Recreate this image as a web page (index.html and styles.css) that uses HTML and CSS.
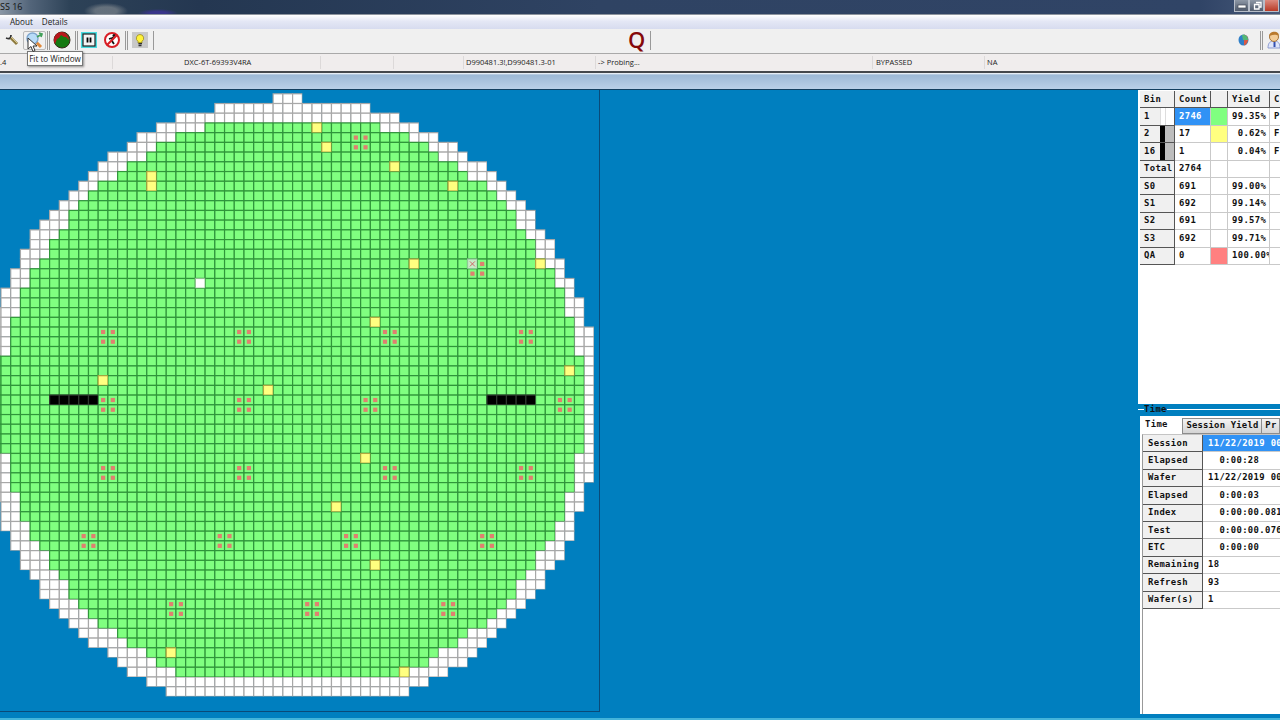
FILE: index.html
```html
<!DOCTYPE html>
<html lang="en">
<head>
    <meta charset="UTF-8">
    <title>SS 16</title>
    <link rel="stylesheet" href="styles.css">
</head>
<body>
    <div class="titlebar">
        <span class="title">SS 16</span>
        <div class="window-buttons">
            <span class="wbtn"><svg width="14" height="14" viewBox="0 0 14 14"><rect x="3" y="5" width="8" height="3" fill="#fff" stroke="#444b58" stroke-width=".7"/></svg></span>
            <span class="wbtn"><svg width="14" height="14" viewBox="0 0 14 14"><path d="M6 2.500h5v4.500h-2M4.500 4.500h4.500v4.500h-4.500z" fill="none" stroke="#fff" stroke-width="1.300"/></svg></span>
            <span class="wbtn close"></span>
        </div>
    </div>

    <div class="menubar">
        <span>About</span>
        <span>Details</span>
    </div>

    <div class="toolbar">
        <div class="tools">
            <svg class="tool wrench" width="16" height="16" viewBox="0 0 16 16">
                <path d="M2 6c3 1 5 1 5-3" fill="none" stroke="#333" stroke-width="1.8"/>
                <path d="M7 6l6 6" stroke="#8d7a3e" stroke-width="3"/>
                <path d="M7 5l6 6" stroke="#d6c68a" stroke-width="1"/>
            </svg>
            <span class="tool fit">
                <svg width="20" height="18" viewBox="0 0 20 18">
                    <path d="M11 10l5 5" stroke="#e08a3c" stroke-width="3"/>
                    <circle cx="7.5" cy="6.5" r="5.5" fill="#b8dcf8" stroke="#7ea6cf" stroke-width="1.4"/>
                    <path d="M12 5l5-3M14 1l3 1-1 3" fill="none" stroke="#43a05a" stroke-width="1.7"/>
                </svg>
            </span>
            <i class="sep"></i>
            <svg class="tool map" width="18" height="18" viewBox="0 0 18 18">
                <circle cx="9" cy="9" r="8" fill="#167a12" stroke="#3a2a1c" stroke-width="1"/>
                <path d="M9 1A8 8 0 0 0 2 13L4 8l2-1 2-3 3 2 2 0 3 3A8 8 0 0 0 9 1z" fill="#b8181c"/>
            </svg>
            <i class="sep"></i>
            <svg class="tool pause" width="16" height="16" viewBox="0 0 16 16">
                <rect x="0" y="0" width="16" height="16" fill="#48dce0"/>
                <rect x="2" y="2" width="12" height="12" fill="#f4f4f4" stroke="#222" stroke-width="1.2"/>
                <path d="M6.500 5.500v5M9.500 5.500v5" stroke="#000" stroke-width="1.800"/>
            </svg>
            <svg class="tool stop" width="18" height="18" viewBox="0 0 18 18">
                <circle cx="9" cy="9" r="7" fill="#fff" stroke="#d81f26" stroke-width="2"/>
                <circle cx="11" cy="4.500" r="1.500" fill="#111"/>
                <path d="M10 6l-1 4 2 3M9 7l-3 1" fill="none" stroke="#111" stroke-width="1.800"/>
                <path d="M14 4L4 14" stroke="#d81f26" stroke-width="2.200"/>
            </svg>
            <i class="sep"></i>
            <span class="tool bulb">
                <svg width="16" height="16" viewBox="0 0 16 16">
                    <path d="M8 2.500a3.700 3.700 0 0 0-2 6.800V11h4V9.300a3.700 3.700 0 0 0-2-6.800z" fill="#fff23a" stroke="#9d8d18" stroke-width=".8"/>
                    <path d="M6.500 11.500h3.500M6.500 13.500h3" stroke="#333" stroke-width="1.300"/>
                </svg>
            </span>
            <i class="sep single"></i>
        </div>
        <span class="q">Q</span>
        <i class="sep single"></i>
        <div class="right-tools">
            <svg class="tool" width="12" height="14" viewBox="0 0 12 14">
                <ellipse cx="6.500" cy="7" rx="5" ry="5.500" fill="#2f7fc8"/>
                <path d="M7 1.500c6 1 5 9 0 11z" fill="#dc5a42"/>
                <path d="M5 2c4-1 6 2 6 5l-5 0z" fill="#52b878"/>
            </svg>
            <i class="sep"></i>
            <svg class="tool user" width="14" height="18" viewBox="0 0 14 18">
                <path d="M1 17c0-5 2-7 6-7s6 2 6 7z" fill="#dfe6fb" stroke="#8c9bd0"/>
                <circle cx="7" cy="6" r="4.500" fill="#f3cd98" stroke="#a5753c"/>
                <path d="M2 5c0-5 10-6 10 0-4-2-6-1-10 0z" fill="#b97a2e"/>
                <path d="M7.500 11v5" stroke="#3450b0" stroke-width="2"/>
            </svg>
        </div>
    </div>

    <div class="statusbar">
        <span class="s1">.4</span>
        <span class="s2">DXC-6T-69393V4RA</span>
        <span class="s3"></span>
        <span class="s4"></span>
        <span class="s5">D990481.3!,D990481.3-01</span>
        <span class="s6">-&gt; Probing...</span>
        <span class="s7">BYPASSED</span>
        <span class="s8">NA</span>
    </div>
    <div class="mdi-bar"></div>

    <div class="workspace">
        <div class="wafer">
            <canvas id="wafer" width="599" height="621"></canvas>
        </div>
        <div class="side">
            <div class="bins">
                <table class="grid bin-table">
                    <colgroup><col class="c-bin"><col class="c-count"><col class="c-color"><col class="c-yield"><col class="c-cat"></colgroup>
                    <tr class="head"><th>Bin</th><th>Count</th><th></th><th>Yield</th><th>C</th></tr>
                    <tr><th class="bar light">1</th><td class="sel">2746</td><td class="green"></td><td>99.35%</td><td>P</td></tr>
                    <tr><th class="bar">2</th><td>17</td><td class="yellow"></td><td> 0.62%</td><td>F</td></tr>
                    <tr><th class="bar">16</th><td>1</td><td class="white"></td><td> 0.04%</td><td>F</td></tr>
                    <tr><th>Total</th><td>2764</td><td></td><td></td><td></td></tr>
                    <tr><th>S0</th><td>691</td><td></td><td>99.00%</td><td></td></tr>
                    <tr><th>S1</th><td>692</td><td></td><td>99.14%</td><td></td></tr>
                    <tr><th>S2</th><td>691</td><td></td><td>99.57%</td><td></td></tr>
                    <tr><th>S3</th><td>692</td><td></td><td>99.71%</td><td></td></tr>
                    <tr><th>QA</th><td>0</td><td class="red"></td><td>100.00%</td><td></td></tr>
                </table>
            </div>
            <div class="group-title"><span>Time</span></div>
            <div class="time-box">
                <div class="tabs">
                    <span class="tab active">Time</span>
                    <span class="tab">Session Yield</span>
                    <span class="tab last">Pr</span>
                </div>
                <div class="time-page">
                    <table class="grid time-table">
                        <colgroup><col class="c-label"><col class="c-value"></colgroup>
                        <tr><th>Session</th><td class="sel">11/22/2019 00</td></tr>
                        <tr><th>Elapsed</th><td>  0:00:28</td></tr>
                        <tr><th>Wafer</th><td>11/22/2019 00</td></tr>
                        <tr><th>Elapsed</th><td>  0:00:03</td></tr>
                        <tr><th>Index</th><td>  0:00:00.081</td></tr>
                        <tr><th>Test</th><td>  0:00:00.076</td></tr>
                        <tr><th>ETC</th><td>  0:00:00</td></tr>
                        <tr><th>Remaining</th><td>18</td></tr>
                        <tr><th>Refresh</th><td>93</td></tr>
                        <tr><th>Wafer(s)</th><td>1</td></tr>
                    </table>
                </div>
            </div>
        </div>
    </div>

    <div class="tooltip">Fit to Window</div>
    <svg class="cursor" width="12" height="16" viewBox="0 0 12 16">
        <path d="M1 1v11l3-2.500 2 5 2-1-2-4.500h4z" fill="#fff" stroke="#333" stroke-width="1"/>
    </svg>

    <script src="wafer.js"></script>
</body>
</html>
```
FILE: styles.css
```css
* {
    box-sizing: border-box;
}

body {
    margin: 0;
    width: 1280px;
    height: 720px;
    overflow: hidden;
    position: relative;
    display: flex;
    flex-direction: column;
    background: #007fbf;
    font-family: "Open Sans", "Noto Sans", sans-serif;
    font-size: 8.1px;
    color: #1a1a1a;
}

.titlebar {
    height: 15px;
    display: flex;
    justify-content: space-between;
    background:
        radial-gradient(ellipse 22px 8px at 106px 11px, rgba(140, 146, 150, 0.6) 0 50%, transparent),
        radial-gradient(ellipse 20px 4px at 158px 13px, #39358a 0 40%, transparent),
        linear-gradient(90deg, #8a97a6 0, #53657a 30px, #2d4257 70px, #243751 200px, #2f4363 600px, #304466 1200px, #47597a);
    border-bottom: 1px solid #8d949e;
}

.title {
    font-size: 9px;
    line-height: 14px;
    color: #111;
}

.window-buttons {
    display: flex;
    width: 46px;
    height: 12px;
}

.wbtn {
    width: 15px;
    height: 12px;
    overflow: hidden;
    background: linear-gradient(#8e98a6, #4f5a6c);
    border: 1px solid #b6bdc8;
    border-top: 0;
}

.wbtn svg {
    display: block;
}

.wbtn.close {
    background: linear-gradient(#dc8a7e, #b83a26);
}

.menubar {
    height: 14px;
    display: flex;
    gap: 9px;
    padding-left: 10px;
    line-height: 14px;
    background: linear-gradient(#fff, #e4e7f5 45%, #d7dcef);
}

.toolbar {
    height: 25px;
    display: flex;
    align-items: center;
    padding-bottom: 2px;
    background: #f0f0f0;
    border-bottom: 1px solid #a9a9a9;
}

.tools {
    width: 628px;
    display: flex;
    align-items: center;
}

.tool {
    display: block;
    flex: none;
}

.wrench {
    margin-left: 4px;
}

.fit {
    margin-left: 3px;
    width: 23px;
    height: 19px;
    padding: 0 1px;
    border: 1px solid #b9b9b9;
    border-radius: 2px;
}

.sep {
    flex: none;
    width: 3px;
    height: 19px;
    border: 1px solid #999;
    border-width: 0 1px;
}

.sep.single {
    width: 1px;
    border-right: 0;
}

.tools .sep {
    margin-left: 1px;
}

.map {
    margin: 0 3px 0 3px;
}

.pause {
    margin: 0 6px 0 3px;
}

.stop {
    margin-right: 3px;
}

.bulb {
    width: 16px;
    height: 16px;
    margin: 0 4px 0 4px;
    background: #c8c8c8;
}

.q {
    width: 22px;
    height: 24px;
    font-size: 22px;
    line-height: 22px;
    font-weight: 600;
    color: #85090b;
}

.right-tools {
    margin-left: auto;
    width: 43px;
    display: flex;
    align-items: center;
}

.right-tools .sep {
    margin: 0 4px 0 11px;
}

.statusbar {
    height: 19px;
    display: flex;
    align-items: center;
    padding-bottom: 1px;
    background: #f0eded;
    border-bottom: 2px solid #45484c;
    font-size: 7.5px;
}

.statusbar span {
    height: 13px;
    line-height: 12px;
    white-space: nowrap;
    border-right: 1px solid #dcd9d9;
}

.s1 { width: 113px; }
.s2 { width: 208px; padding-left: 71px; }
.s3 { width: 73px; }
.s4 { width: 70px; }
.s5 { width: 132px; padding-left: 2px; }
.s6 { width: 277px; padding-left: 2px; }
.s7 { width: 112px; padding-left: 3px; }
.statusbar .s8 { padding-left: 2px; border: 0; }

.mdi-bar {
    height: 17px;
    flex: none;
    background: linear-gradient(#fff 0, #9db9d6 2px, #b9d0e8);
    border-bottom: 1px solid #123f60;
}

.workspace {
    flex: 1;
    min-height: 0;
    display: flex;
    justify-content: space-between;
    border-bottom: 2px solid #43b4da;
}

.wafer {
    width: 600px;
    height: 622px;
    border-right: 1px solid #0a4a78;
    border-bottom: 1px solid #0a4a78;
}

.wafer canvas {
    display: block;
}

.side {
    width: 142px;
    display: flex;
    flex-direction: column;
    overflow: hidden;
    font-family: "DejaVu Sans Mono", monospace;
    font-size: 8.9px;
    letter-spacing: 0.35px;
    font-weight: bold;
    color: #111;
}

.bins {
    height: 314px;
    padding: 1px 0 0 2px;
    background: #fff;
}

.grid {
    table-layout: fixed;
    border-collapse: separate;
    border-spacing: 0;
}

.grid th,
.grid td {
    height: 17.4px;
    padding: 0 0 0 4px;
    overflow: hidden;
    line-height: 15px;
    text-align: left;
    white-space: pre;
    border-right: 1px solid #c9c9c9;
    border-bottom: 1px solid #c9c9c9;
}

.grid th {
    background: #f0f0f0;
    border-right-color: #555;
    border-bottom-color: #555;
}

.grid .sel {
    color: #fff;
    background: #3092f5;
}

.bin-table { width: 150px; }
.c-bin { width: 35px; }
.c-count { width: 36px; }
.c-color { width: 17px; }
.c-yield { width: 42px; }
.c-cat { width: 20px; }

.grid .bar {
    background: linear-gradient(90deg, #f0f0f0 20px, #000 20px 25px, #bdbdbd 25px);
}

.grid .bar.light {
    background: linear-gradient(90deg, #f0f0f0 20px, #ddd 20px 21px, #fff 21px 25px, #ddd 25px 26px, #fff 26px);
}

.green { background: #80ff80; }
.yellow { background: #ffff80; }
.white { background: #fff; }
.red { background: #ff8080; }

.group-title {
    height: 12px;
    padding-left: 6px;
    line-height: 11px;
    background: linear-gradient(#007fbf 5px, #fff 5px 6px, #007fbf 6px);
}

.group-title span {
    background: #007fbf;
}

.time-box {
    flex: 1;
    margin-left: 2px;
    margin-bottom: 4px;
    display: flex;
    flex-direction: column;
    background: #fff;
}

.tabs {
    height: 18px;
    display: flex;
    align-items: flex-end;
}

.tab {
    height: 16px;
    padding-left: 3px;
    line-height: 13px;
    white-space: nowrap;
    background: linear-gradient(#f4f4f4, #d4d4d4);
    border: 1px solid #8c8c8c;
}

.tab:nth-child(2) {
    width: 81px;
    letter-spacing: 0.2px;
}

.tab.active {
    width: 43px;
    height: 18px;
    padding-left: 5px;
    line-height: 16px;
    background: #fff;
    border: 0;
}

.tab.last {
    width: 18px;
    border-left: 0;
}

.time-page {
    flex: 1;
    margin-left: 2px;
    border-top: 1px solid #c4c4c4;
    border-left: 1px solid #999;
}

.time-table { width: 160px; }
.c-label { width: 60px; }
.c-value { width: 100px; }

.time-table th,
.time-table td {
    padding-left: 5px;
}

.tooltip {
    position: absolute;
    left: 27px;
    top: 51px;
    width: 56px;
    height: 15px;
    line-height: 13px;
    text-align: center;
    white-space: nowrap;
    background: #fdfdfd;
    border: 1px solid #777;
    box-shadow: 1px 1px 2px rgba(0, 0, 0, 0.4);
}

.cursor {
    position: absolute;
    left: 27px;
    top: 37px;
}
```
FILE: wafer.js
```js
const canvas = document.getElementById("wafer");
const ctx = canvas.getContext("2d");
const PITCH = 9.72;
const LEFT = 1;
const TOP = 3.8;

// per row: wafer start, tested start, tested end, wafer end
const rows = [
    [28, 31, 31, 31], [22, 38, 38, 38], [18, 41, 41, 41], [16, 21, 39, 43], [14, 18, 42, 45],
    [13, 16, 44, 47], [11, 15, 45, 48], [10, 13, 47, 50], [9, 12, 48, 51], [8, 10, 50, 52],
    [7, 9, 51, 53], [6, 8, 52, 54], [5, 7, 53, 55], [4, 7, 53, 55], [3, 6, 54, 56],
    [3, 5, 55, 57], [2, 5, 55, 57], [2, 4, 56, 58], [1, 3, 57, 58], [1, 3, 57, 59],
    [0, 2, 58, 59], [0, 2, 58, 60], [-1, 2, 58, 60], [-1, 1, 59, 60], [-1, 1, 59, 61],
    [-1, 1, 59, 61], [-1, 1, 59, 61], [-1, -1, 60, 61], [-1, -1, 60, 61], [-1, -1, 60, 61],
    [-1, -1, 60, 61], [-1, -1, 60, 61], [-1, -1, 60, 61], [-1, -1, 60, 61], [-1, -1, 60, 61],
    [-1, -1, 60, 61], [-1, -1, 60, 61], [-1, 1, 59, 61], [-1, 1, 59, 61], [-1, 1, 59, 61],
    [-1, 1, 59, 60], [-1, 2, 58, 60], [0, 2, 58, 60], [0, 2, 58, 59], [0, 3, 57, 59],
    [1, 3, 57, 59], [1, 4, 56, 58], [2, 5, 55, 58], [2, 5, 55, 57], [3, 6, 54, 56],
    [4, 7, 53, 56], [4, 7, 53, 55], [5, 8, 52, 54], [6, 9, 51, 53], [7, 10, 50, 52],
    [8, 12, 48, 51], [9, 13, 47, 50], [11, 15, 45, 49], [12, 16, 44, 48], [13, 18, 42, 46],
    [15, 44, 44, 44], [17, 42, 42, 42]
];

const fails = [
    [32, 3], [33, 5], [40, 7], [46, 9], [15, 8], [15, 9], [42, 17], [55, 17], [38, 23],
    [58, 28], [10, 29], [27, 30], [37, 37], [34, 42], [38, 48], [17, 57], [41, 59]
];

const qaSites = [
    [36, 4], [48, 17],
    [10, 24], [24, 24], [39, 24], [53, 24],
    [10, 31], [24, 31], [37, 31], [57, 31],
    [10, 38], [24, 38], [39, 38], [53, 38],
    [8, 45], [22, 45], [35, 45], [49, 45],
    [17, 52], [31, 52], [45, 52]
];

// the grid line runs along the left and top edge of each die
function die(col, row, line, fill) {
    const x = LEFT + col * PITCH;
    const y = TOP + row * PITCH;
    ctx.fillStyle = line;
    ctx.fillRect(x - 0.6, y - 0.6, PITCH + 0.6, PITCH + 0.6);
    ctx.fillStyle = fill;
    ctx.fillRect(x + 0.6, y + 0.6, PITCH - 1.2, PITCH - 1.2);
}

rows.forEach(([start, testStart, testEnd, end], row) => {
    for (let col = start; col < end; col++) {
        if (col < testStart || col >= testEnd) die(col, row, "#a8a8a8", "#ffffff");
    }
});
rows.forEach(([start, testStart, testEnd], row) => {
    for (let col = testStart; col < testEnd; col++) {
        die(col, row, "#30963a", "#80ff80");
    }
});

fails.forEach(([col, row]) => die(col, row, "#b0a840", "#ffff80"));
die(20, 19, "#90c090", "#ffffff");

for (let i = 0; i < 5; i++) {
    die(5 + i, 31, "#303830", "#000000");
    die(50 + i, 31, "#303830", "#000000");
}

qaSites.forEach(([col, row]) => {
    for (let i = 0; i < 4; i++) {
        const x = LEFT + (col + i % 2) * PITCH;
        const y = TOP + (row + (i >> 1)) * PITCH;
        ctx.fillStyle = "#e08070";
        ctx.fillRect(x + 2.8, y + 2.8, 4.2, 4.2);
    }
});

// current die
die(48, 17, "#90c898", "#c8ecc8");
ctx.strokeStyle = "#d06868";
ctx.beginPath();
const cx = LEFT + 48.5 * PITCH;
const cy = TOP + 17.5 * PITCH;
ctx.moveTo(cx - 2.5, cy - 2.5);
ctx.lineTo(cx + 2.5, cy + 2.5);
ctx.moveTo(cx + 2.5, cy - 2.5);
ctx.lineTo(cx - 2.5, cy + 2.5);
ctx.stroke();
```
